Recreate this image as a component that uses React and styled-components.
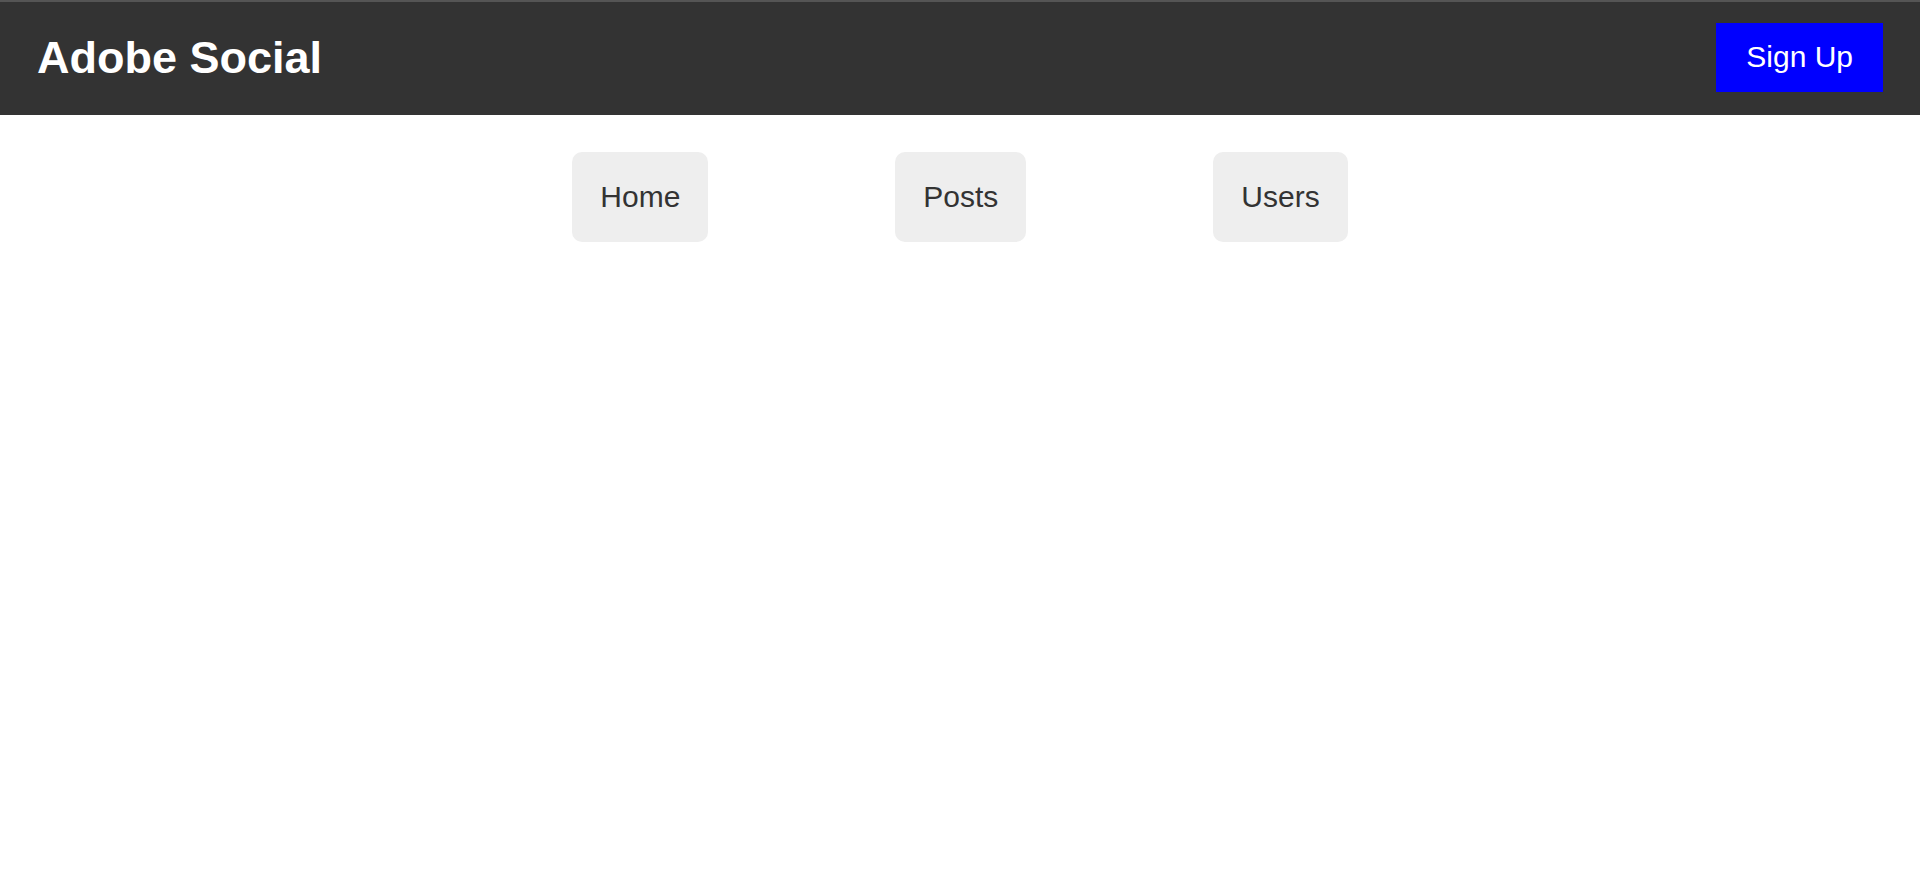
import React from "react";
import styled, { createGlobalStyle } from "styled-components";

const GlobalStyle = createGlobalStyle`
  body {
    margin: 0;
    background: #fff;
    font-family: "Liberation Sans", Arial, sans-serif;
  }
`;

const Header = styled.header`
  box-sizing: border-box;
  height: 115px;
  border-top: 2px solid #555;
  background-color: #333;
  display: flex;
  align-items: center;
  justify-content: space-between;
  padding: 0 37px 2px 37px;
`;

const Logo = styled.h1`
  margin: 0;
  color: #fff;
  font-size: 45px;
  font-weight: bold;
`;

const SignUpButton = styled.button`
  background-color: #00f;
  color: #fff;
  border: none;
  font-family: inherit;
  font-size: 30px;
  padding: 17px 30px 18px;
  line-height: normal;
  cursor: pointer;
`;

const Nav = styled.nav`
  display: flex;
  justify-content: center;
  gap: 187px;
  margin-top: 37px;
`;

const NavButton = styled.button`
  background-color: #eee;
  color: #333;
  border: none;
  border-radius: 10px;
  font-family: inherit;
  font-size: 30px;
  padding: 28px;
  line-height: normal;
  cursor: pointer;
`;

const links = ["Home", "Posts", "Users"];

export default function App() {
  return (
    <>
      <GlobalStyle />
      <Header>
        <Logo>Adobe Social</Logo>
        <SignUpButton>Sign Up</SignUpButton>
      </Header>
      <Nav>
        {links.map(link => (
          <NavButton key={link}>{link}</NavButton>
        ))}
      </Nav>
    </>
  );
}
